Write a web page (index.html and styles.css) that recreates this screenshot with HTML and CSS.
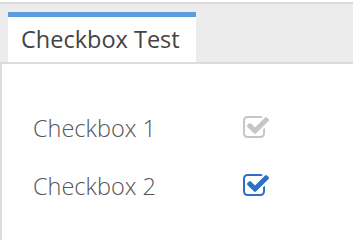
FILE: index.html
```html
<!DOCTYPE html>
<html lang="en">
<head>
    <meta charset="UTF-8">
    <title>Checkbox Test</title>
    <link rel="stylesheet" href="styles.css">
</head>
<body>
    <div class="tabs">
        <div class="tab active">Checkbox Test</div>
    </div>

    <div class="panel">
        <div class="row">
            <span class="label">Checkbox 1</span>
            <svg class="check disabled" viewBox="0 0 1792 1792" width="28" height="28">
                <path d="M1472 930v318q0 119-84.5 203.5t-203.5 84.5h-832q-119 0-203.5-84.5t-84.5-203.5v-832q0-119 84.5-203.5t203.5-84.5h832q63 0 117 25 15 7 18 23 3 17-9 29l-49 49q-10 10-23 10-3 0-9-2-23-6-45-6h-832q-66 0-113 47t-47 113v832q0 66 47 113t113 47h832q66 0 113-47t47-113v-254q0-13 9-22l64-64q10-10 23-10 6 0 12 3 20 8 20 29zm231-489l-814 814q-24 24-57 24t-57-24l-430-430q-24-24-24-57t24-57l110-110q24-24 57-24t57 24l263 263 647-647q24-24 57-24t57 24l110 110q24 24 24 57t-24 57z"/>
            </svg>
        </div>
        <div class="row">
            <span class="label">Checkbox 2</span>
            <svg class="check" viewBox="0 0 1792 1792" width="28" height="28">
                <path d="M1472 930v318q0 119-84.5 203.5t-203.5 84.5h-832q-119 0-203.5-84.5t-84.5-203.5v-832q0-119 84.5-203.5t203.5-84.5h832q63 0 117 25 15 7 18 23 3 17-9 29l-49 49q-10 10-23 10-3 0-9-2-23-6-45-6h-832q-66 0-113 47t-47 113v832q0 66 47 113t113 47h832q66 0 113-47t47-113v-254q0-13 9-22l64-64q10-10 23-10 6 0 12 3 20 8 20 29zm231-489l-814 814q-24 24-57 24t-57-24l-430-430q-24-24-24-57t24-57l110-110q24-24 57-24t57 24l263 263 647-647q24-24 57-24t57 24l110 110q24 24 24 57t-24 57z"/>
            </svg>
        </div>
    </div>
</body>
</html>
```

FILE: styles.css
```css
body {
    font-family: "Open Sans", sans-serif;
    background-color: #fff;
    margin: 0;
    padding: 0;
}
.tabs {
    display: flex;
    margin: 2px 1px 0 0;
    padding: 8px 0 0 8px;
    background-color: #ececec;
    border-top: 2px solid #dcdcdc;
    border-bottom: 2px solid #dcdcdc;
}
.tab {
    width: 175px;
    height: 45px;
    padding-left: 13px;
    border-top: 5px solid #5b9de0;
    background-color: #fff;
    color: #444;
    font-size: 23.5px;
    line-height: 44px;
}
.panel {
    height: 176px;
    padding: 35px 0 0 31px;
    border-left: 2px solid #dcdcdc;
    box-sizing: border-box;
}
.row {
    display: flex;
    align-items: center;
    height: 58px;
}
.label {
    width: 209px;
    color: #555;
    font-size: 23.5px;
    font-weight: 300;
}
.check {
    fill: #2e6fc7;
}
.check.disabled {
    fill: #c6c6c6;
}
```
